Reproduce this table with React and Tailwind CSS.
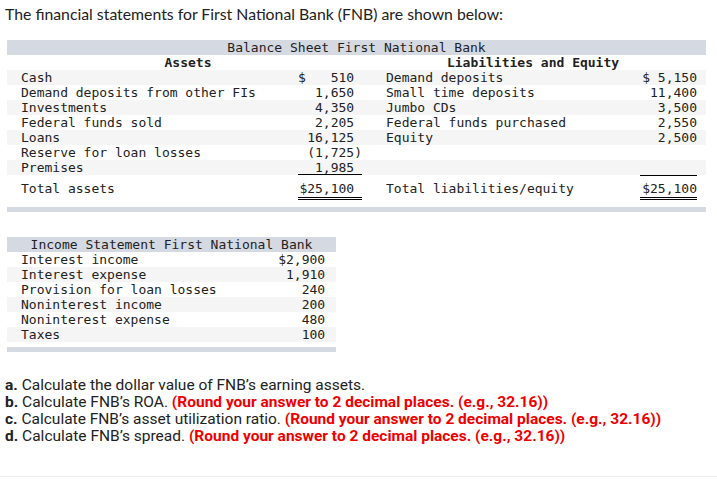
import React from 'react';

const mono = { fontFamily: '"DejaVu Sans Mono", monospace' };

// [left label, left amount, right label, right amount]
const BALANCE = [
  ['Cash', ['$', '510'], 'Demand deposits', '$ 5,150'],
  ['Demand deposits from other FIs', '1,650', 'Small time deposits', '11,400'],
  ['Investments', '4,350', 'Jumbo CDs', '3,500'],
  ['Federal funds sold', '2,205', 'Federal funds purchased', '2,550'],
  ['Loans', '16,125', 'Equity', '2,500'],
  ['Reserve for loan losses', '(1,725)', '', ''],
  ['Premises', '1,985', '', ''],
];

const INCOME = [
  ['Interest income', '$2,900'],
  ['Interest expense', '1,910'],
  ['Provision for loan losses', '240'],
  ['Noninterest income', '200'],
  ['Noninterest expense', '480'],
  ['Taxes', '100'],
];

// numbers hang their closing paren past the column edge
function Amount({ value }) {
  if (Array.isArray(value)) {
    return (
      <span className="flex justify-between whitespace-pre">
        <span>{value[0]}</span>
        <span>{value[1] + '\u00a0'}</span>
      </span>
    );
  }
  const hang = value.endsWith(')') ? value : value + '\u00a0';
  return <span className="block text-right whitespace-pre">{value ? hang : ''}</span>;
}

function BalanceSheet() {
  return (
    <div className="ml-[7px] w-[699px] text-[13px] leading-[15px] text-[#222]" style={mono}>
      <div className="h-[15px] bg-[#d5d9e2] text-center">Balance Sheet First National Bank</div>
      <div className="flex h-[15px] font-bold">
        <div className="w-[362px] text-center">Assets</div>
        <div className="w-[337px] pr-[9px] text-center">Liabilities and Equity</div>
      </div>
      {BALANCE.map(([l, la, r, ra], i) => (
        <div key={l} className={`flex h-[15px] ${i % 2 === 0 ? 'bg-[#f5f5f5]' : ''}`}>
          <div className="w-[291px] pl-[14px]">{l}</div>
          <div className={`w-[64px] ${l === 'Premises' ? 'border-b border-black' : ''}`}>
            <Amount value={la} />
          </div>
          <div className="w-[24px]" />
          <div className="w-[254px]">{r}</div>
          <div className="w-[57px] text-right">{ra}</div>
        </div>
      ))}
      <div className="flex">
        <div className="w-[291px] pl-[14px] pt-[6px]">Total assets</div>
        <div className="w-[64px] pt-[6px] pb-px border-b-[3px] border-double border-black">
          <Amount value="$25,100" />
        </div>
        <div className="w-[24px]" />
        <div className="w-[254px] pt-[6px]">Total liabilities/equity</div>
        <div className="w-[57px] pt-[5px] pb-px text-right border-t border-b-[3px] border-double border-black">
          $25,100
        </div>
      </div>
      <div className="mt-[7px] h-[5px] bg-[#d5d9e2]" />
    </div>
  );
}

function IncomeStatement() {
  return (
    <div className="ml-[7px] mt-[25px] w-[329px] text-[13px] leading-[15px] text-[#222]" style={mono}>
      <div className="h-[15px] bg-[#d5d9e2] text-center">Income Statement First National Bank</div>
      {INCOME.map(([l, a], i) => (
        <div key={l} className={`flex h-[15px] ${i % 2 === 1 ? 'bg-[#f5f5f5]' : ''}`}>
          <div className="flex-1 pl-[14px]">{l}</div>
          <div className="w-[80px] pr-[3px]">
            <Amount value={a} />
          </div>
        </div>
      ))}
      <div className="mt-[5px] h-[5px] bg-[#d5d9e2]" />
    </div>
  );
}

function Question({ letter, text, note }) {
  return (
    <div className="leading-[17px] whitespace-nowrap">
      <span className="font-bold">{letter}</span> {text}
      {note && <span className="font-bold text-[#ee0000]"> {note}</span>}
    </div>
  );
}

export default function App() {
  const note = '(Round your answer to 2 decimal places. (e.g., 32.16))';
  return (
    <div className="w-[717px] h-[480px] bg-white overflow-hidden relative">
      <div
        className="pl-[5px] pt-[4px] h-[40px] text-[15.8px] leading-[20px] text-[#222]"
        style={{ fontFamily: 'Lato, "Liberation Sans", sans-serif' }}
      >
        The financial statements for First National Bank (FNB) are shown below:
      </div>
      <BalanceSheet />
      <IncomeStatement />
      <div
        className="mt-[25px] pl-[5px] text-[15.5px] text-[#222]"
        style={{ fontFamily: '"Liberation Sans Narrow", Roboto, sans-serif' }}
      >
        <Question letter="a." text="Calculate the dollar value of FNB’s earning assets." />
        <Question letter="b." text="Calculate FNB’s ROA." note={note} />
        <Question letter="c." text="Calculate FNB’s asset utilization ratio." note={note} />
        <Question letter="d." text="Calculate FNB’s spread." note={note} />
      </div>
      <div className="absolute left-0 right-0 bottom-[3px] h-px bg-[#ececec]" />
    </div>
  );
}
